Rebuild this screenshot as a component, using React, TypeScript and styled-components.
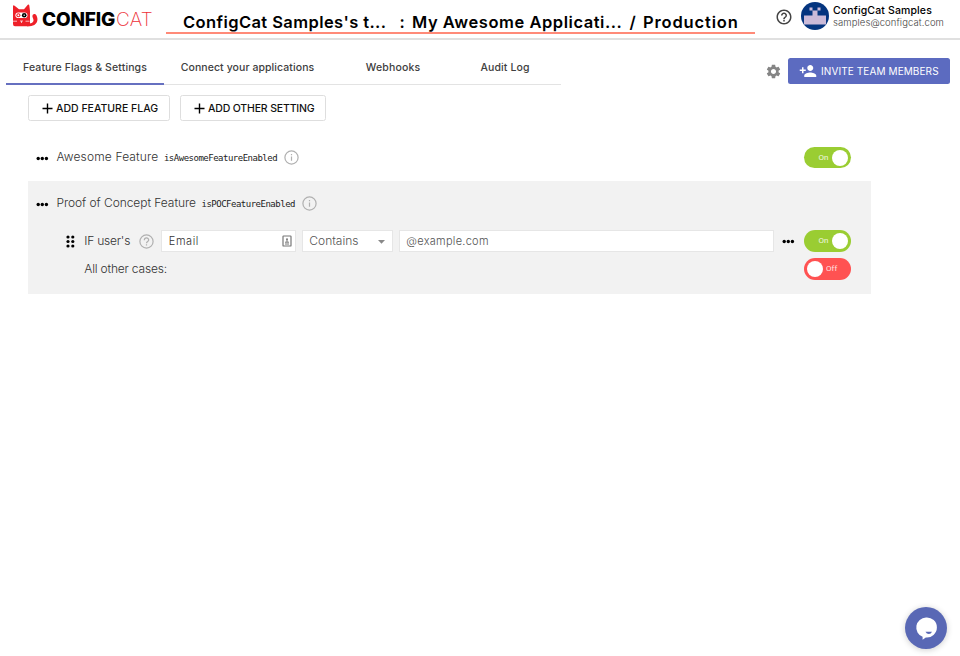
import React from 'react';
import styled, { createGlobalStyle } from 'styled-components';

const Global = createGlobalStyle`
  * { box-sizing: border-box; }
  body { margin: 0; background: #fff; color: #000; font-family: Inter, "Liberation Sans", sans-serif; }
`;

interface Spaced { $ls?: number }

const Page = styled.div`
  height: 656px;
  overflow: hidden;
`;

const Header = styled.header`
  display: flex;
  height: 40px;
  border-bottom: 2px solid #e0e0e0;
`;

const Logo = styled.div`
  display: flex;
  width: 154px;
  height: 38px;
  padding-left: 12px;
`;

const CatIcon = styled.svg`
  width: 26px;
  height: 26px;
  margin: 3px 4px 0 0;
  flex: none;
`;

const Brand = styled.span`
  font-size: 19px;
  line-height: 39px;
  font-weight: 800;
  letter-spacing: -0.2px;
`;

const BrandThin = styled.span`
  margin-left: 1px;
  color: #ed2f38;
  font-weight: 200;
  letter-spacing: 0.2px;
`;

const Breadcrumb = styled.div`
  display: flex;
  width: 589px;
  height: 34px;
  margin-left: 12px;
  padding: 10px 0 0 17px;
  border-bottom: 2px solid #ff8a78;
  white-space: nowrap;
`;

const Crumb = styled.span<{ $w: number } & Spaced>`
  width: ${p => p.$w}px;
  flex: none;
  font-size: 16.5px;
  line-height: 24px;
  font-weight: 600;
  letter-spacing: ${p => p.$ls ?? 0}px;
`;

const HelpIcon = styled.svg`
  width: 18px;
  height: 18px;
  margin: 8px 8.5px 0 19.5px;
  flex: none;
`;

const Avatar = styled.svg`
  width: 28px;
  height: 28px;
  margin: 2px 4px 0 0;
  flex: none;
`;

const Account = styled.div`
  display: flex;
  flex-direction: column;
  padding-top: 5px;
  white-space: nowrap;
`;

const AccountName = styled.span`
  font-size: 10.5px;
  line-height: 12px;
  font-weight: 500;
  letter-spacing: 0.14px;
`;

const AccountMail = styled.span`
  font-size: 9.5px;
  line-height: 12px;
  color: #444;
  font-weight: 300;
  letter-spacing: 0.09px;
`;

const NavRow = styled.div`
  display: flex;
  height: 45px;
  padding-left: 6px;
`;

const Tabs = styled.nav`
  display: flex;
  width: 555px;
  border-bottom: 1px solid #e3e3e3;
`;

const Tab = styled.a<{ $w: number; $active?: boolean } & Spaced>`
  width: ${p => p.$w}px;
  height: 45px;
  padding-top: 18px;
  border-bottom: ${p => (p.$active ? '2px solid #6670c0' : '0')};
  color: #404040;
  font-size: 10.5px;
  line-height: 20px;
  font-weight: 500;
  letter-spacing: ${p => p.$ls ?? 0}px;
  text-align: center;
  white-space: nowrap;
`;

const Gear = styled.svg`
  width: 17px;
  height: 17px;
  margin: 23px 6px 0 204px;
  flex: none;
`;

const InviteButton = styled.button`
  display: flex;
  align-items: center;
  width: 162px;
  height: 26px;
  margin-top: 18px;
  padding: 0 0 0 11px;
  border: 0;
  border-radius: 2.5px;
  background: #5c6bc0;
  color: #fff;
  font: 400 10px Inter, sans-serif;
  letter-spacing: 0.1px;
  white-space: nowrap;
`;

const InviteIcon = styled.svg`
  width: 18px;
  height: 18px;
  margin-right: 4px;
  flex: none;
`;

const Actions = styled.div`
  display: flex;
  gap: 10px;
  padding: 10px 0 0 28px;
`;

const ActionButton = styled.button<{ $w: number } & Spaced>`
  display: flex;
  align-items: center;
  width: ${p => p.$w}px;
  height: 26px;
  padding: 0 0 0 13px;
  border: 1px solid #dedede;
  border-radius: 2.5px;
  background: #fff;
  color: #111;
  font: 500 10.5px Inter, sans-serif;
  letter-spacing: ${p => p.$ls ?? 0}px;
  white-space: nowrap;
`;

const PlusIcon = styled.svg`
  width: 11px;
  height: 11px;
  margin-right: 3px;
  flex: none;
`;

const Setting = styled.section<{ $shaded?: boolean }>`
  width: 843px;
  margin-left: 28px;
  background: ${p => (p.$shaded ? '#f2f2f2' : 'transparent')};
`;

const List = styled.main`
  padding-top: 14px;
`;

const SettingRow = styled.div`
  display: flex;
  align-items: center;
  height: 46px;
  padding: 0 21px 1px 8px;
`;

const DotsIcon = styled.svg`
  width: 13px;
  height: 5px;
  margin-top: 1px;
  flex: none;
`;

const Name = styled.span<Spaced>`
  margin-left: 7.4px;
  color: #333;
  font-size: 12px;
  line-height: 18px;
  font-weight: 300;
  letter-spacing: ${p => p.$ls ?? 0}px;
  white-space: nowrap;
  padding-bottom: 1px;
`;

const Key = styled.code`
  margin-left: 5.6px;
  color: #222;
  font: 9px/12px "DejaVu Sans Mono", monospace;
  letter-spacing: -0.5px;
`;

const RoundIcon = styled.svg`
  width: 15px;
  height: 15px;
  margin-left: 7px;
  flex: none;
`;

const Spacer = styled.div`
  flex: 1;
`;

const Switch = styled.div<{ $on: boolean }>`
  display: flex;
  flex-direction: ${p => (p.$on ? 'row' : 'row-reverse')};
  align-items: center;
  justify-content: flex-end;
  gap: 3.5px;
  width: 46.5px;
  height: 21.5px;
  padding: 0 2.6px;
  margin-right: -0.5px;
  flex: none;
  border-radius: 11px;
  background: ${p => (p.$on ? '#9acd32' : '#ff5252')};
`;

const SwitchLabel = styled.span`
  color: #fff;
  opacity: 0.85;
  font: 8px/12px Roboto, sans-serif;
`;

const Knob = styled.span`
  width: 16px;
  height: 16px;
  border-radius: 50%;
  background: #fff;
`;

const Rule = styled.div`
  display: flex;
  align-items: center;
  height: 28px;
  padding: 0 21px 0 38px;
`;

const Rules = styled.div`
  padding: 0 0 10.5px;
`;

const DragIcon = styled.svg`
  width: 9px;
  height: 13px;
  flex: none;
`;

const RuleLabel = styled.span<{ $indent: number; $w: number } & Spaced>`
  width: ${p => p.$w}px;
  margin-left: ${p => p.$indent}px;
  padding-bottom: 1px;
  color: #333;
  font-size: 12px;
  line-height: 18px;
  font-weight: 300;
  letter-spacing: ${p => p.$ls ?? 0}px;
  white-space: nowrap;
`;

const Fields = styled.div`
  display: flex;
  gap: 5.5px;
  margin: 0 8px 0 7px;
`;

const Field = styled.div<{ $w: number; $size: number; $tone?: string } & Spaced>`
  display: flex;
  align-items: center;
  justify-content: space-between;
  width: ${p => p.$w}px;
  height: 22px;
  padding: 0 3px 1px 6.5px;
  flex: none;
  border: 1px solid #e6e6e6;
  background: #fff;
  color: ${p => p.$tone ?? '#555'};
  font-size: ${p => p.$size}px;
  font-weight: 300;
  letter-spacing: ${p => p.$ls ?? 0}px;
`;

const CardIcon = styled.svg`
  width: 10px;
  height: 12px;
`;

const Caret = styled.svg`
  width: 7px;
  height: 4px;
  margin: 2px 4px 0 0;
`;

const ChatButton = styled.button`
  position: fixed;
  left: 905px;
  top: 607px;
  width: 42px;
  height: 42px;
  padding: 0;
  border: 0;
  border-radius: 50%;
  background: #5968b5;
  box-shadow: 0 1px 6px rgba(0, 0, 0, 0.2);
`;

const ChatIcon = styled.svg`
  display: block;
  width: 42px;
  height: 42px;
`;

const Dots = () => (
  <DotsIcon viewBox="0 0 13 5">
    <circle cx="2.2" cy="2.5" r="1.7" /><circle cx="6.3" cy="2.5" r="1.7" /><circle cx="10.4" cy="2.5" r="1.7" />
  </DotsIcon>
);

const Info = () => (
  <RoundIcon viewBox="0 0 15 15" fill="none" stroke="#b0b0b0">
    <circle cx="7.5" cy="7.5" r="6.6" strokeWidth="1.2" />
    <path d="M7.5 6.6v4.2M7.5 4v1.2" strokeWidth="1.2" />
  </RoundIcon>
);

const Plus = () => (
  <PlusIcon viewBox="0 0 11 11"><path d="M5.5 .5v10M.5 5.5h10" stroke="#000" strokeWidth="1.4" /></PlusIcon>
);

const Toggle = ({ on }: { on: boolean }) => (
  <Switch $on={on}>
    <SwitchLabel>{on ? 'On' : 'Off'}</SwitchLabel>
    <Knob />
  </Switch>
);

export default function App() {
  return (
    <Page>
      <Global />
      <Header>
        <Logo>
          <CatIcon viewBox="0 0 26 26">
            <path d="M1 3.2Q1.2 1.6 2.6 2.8L7 6.2h5L15.8 1.8Q17 .8 17.3 2.6L18 8V21.5Q18 23.2 16.2 23.2H3Q1 23.2 1 21z" fill="#ee2029" />
            <path d="M15 20.6c7 .6 7.2-3.1 5.8-5.9-1.6-3.2 2.3-5.3 3.9-1.8 2.3 5.1-.6 10.9-8.2 10.3H15z" fill="#ee2029" />
            <rect x="3.4" y="9.5" width="12" height="5.6" rx="2.8" fill="#fff" />
            <circle cx="6.4" cy="12.3" r="2" fill="#ee2029" /><circle cx="6.4" cy="12.3" r="1" fill="#fff" />
            <circle cx="12.2" cy="12.3" r="2.3" /><circle cx="12.2" cy="12.3" r=".7" fill="#fff" />
            <path d="M1 18.2h4M13.5 18.2h4M8 18h3M9.5 18v2" stroke="#fff" strokeWidth=".7" />
          </CatIcon>
          <Brand>CONFIG<BrandThin>CAT</BrandThin></Brand>
        </Logo>
        <Breadcrumb>
          <Crumb $w={216.5} $ls={0.41}>ConfigCat Samples's t...</Crumb>
          <Crumb $w={12.5}>:</Crumb>
          <Crumb $w={217.5} $ls={0.55}>My Awesome Applicati...</Crumb>
          <Crumb $w={13.5}>/</Crumb>
          <Crumb $w={95} $ls={0.85}>Production</Crumb>
        </Breadcrumb>
        <HelpIcon viewBox="0 0 24 24" fill="#444">
          <path d="M11 18h2v-2h-2v2zm1-16C6.48 2 2 6.48 2 12s4.48 10 10 10 10-4.48 10-10S17.52 2 12 2zm0 18c-4.41 0-8-3.59-8-8s3.59-8 8-8 8 3.59 8 8-3.59 8-8 8zm0-14c-2.21 0-4 1.79-4 4h2c0-1.1.9-2 2-2s2 .9 2 2c0 2-3 1.75-3 5h2c0-2.25 3-2.5 3-5 0-2.21-1.79-4-4-4z" />
        </HelpIcon>
        <Avatar viewBox="0 0 28 28">
          <circle cx="14" cy="14" r="14" fill="#05357f" />
          <path d="M8.5 5.5h3v3h-3zM16.5 5.5h3v3h-3zM11.5 8.5h5v5h8.5v9H3v-9h8.5z" fill="#cbbad8" />
        </Avatar>
        <Account>
          <AccountName>ConfigCat Samples</AccountName>
          <AccountMail>samples@configcat.com</AccountMail>
        </Account>
      </Header>
      <NavRow>
        <Tabs>
          <Tab $w={158} $ls={0.12} $active>Feature Flags &amp; Settings</Tab>
          <Tab $w={167} $ls={0.08}>Connect your applications</Tab>
          <Tab $w={124} $ls={0.16}>Webhooks</Tab>
          <Tab $w={100} $ls={0.11}>Audit Log</Tab>
        </Tabs>
        <Gear viewBox="0 0 24 24" fill="#858585">
          <path d="M19.14 12.94c.04-.3.06-.61.06-.94 0-.32-.02-.64-.07-.94l2.03-1.58c.18-.14.23-.41.12-.61l-1.92-3.32c-.12-.22-.37-.29-.59-.22l-2.39.96c-.5-.38-1.03-.7-1.62-.94l-.36-2.54c-.04-.24-.24-.41-.48-.41h-3.84c-.24 0-.43.17-.47.41l-.36 2.54c-.59.24-1.13.57-1.62.94l-2.39-.96c-.22-.08-.47 0-.59.22L2.74 8.87c-.12.21-.08.47.12.61l2.03 1.58c-.05.3-.09.63-.09.94s.02.64.07.94l-2.03 1.58c-.18.14-.23.41-.12.61l1.92 3.32c.12.22.37.29.59.22l2.39-.96c.5.38 1.03.7 1.62.94l.36 2.54c.05.24.24.41.48.41h3.84c.24 0 .44-.17.47-.41l.36-2.54c.59-.24 1.13-.56 1.62-.94l2.39.96c.22.08.47 0 .59-.22l1.92-3.32c.12-.22.07-.47-.12-.61l-2.01-1.58zM12 15.6c-1.98 0-3.6-1.62-3.6-3.6s1.62-3.6 3.6-3.6 3.6 1.62 3.6 3.6-1.62 3.6-3.6 3.6z" />
        </Gear>
        <InviteButton>
          <InviteIcon viewBox="0 0 24 24" fill="#fff">
            <path d="M15 12c2.21 0 4-1.79 4-4s-1.79-4-4-4-4 1.79-4 4 1.79 4 4 4zm-9-2V7H4v3H1v2h3v3h2v-3h3v-2H6zm9 4c-2.67 0-8 1.34-8 4v2h16v-2c0-2.66-5.33-4-8-4z" />
          </InviteIcon>
          INVITE TEAM MEMBERS
        </InviteButton>
      </NavRow>
      <Actions>
        <ActionButton $w={142}><Plus />ADD FEATURE FLAG</ActionButton>
        <ActionButton $w={146} $ls={-0.16}><Plus />ADD OTHER SETTING</ActionButton>
      </Actions>
      <List>
        <Setting>
          <SettingRow>
            <Dots /><Name $ls={0.14}>Awesome Feature</Name><Key>isAwesomeFeatureEnabled</Key><Info />
            <Spacer /><Toggle on />
          </SettingRow>
        </Setting>
        <Setting $shaded>
          <SettingRow>
            <Dots /><Name $ls={-0.05}>Proof of Concept Feature</Name><Key>isPOCFeatureEnabled</Key><Info />
          </SettingRow>
          <Rules>
            <Rule>
              <DragIcon viewBox="0 0 9 13">
                <circle cx="2" cy="2" r="1.6" /><circle cx="6.8" cy="2" r="1.6" />
                <circle cx="2" cy="6.5" r="1.6" /><circle cx="6.8" cy="6.5" r="1.6" />
                <circle cx="2" cy="11" r="1.6" /><circle cx="6.8" cy="11" r="1.6" />
              </DragIcon>
              <RuleLabel $indent={9.3} $w={48} $ls={-0.22}>IF user's</RuleLabel>
              <RoundIcon viewBox="0 0 15 15" fill="none" stroke="#b0b0b0">
                <circle cx="7.5" cy="7.5" r="6.6" strokeWidth="1.2" />
                <path d="M5.3 6.2c0-3 4.4-3 4.4-.2 0 1.6-2.2 1.6-2.2 3.3M7.5 10.3v1.2" strokeWidth="1.2" />
              </RoundIcon>
              <Fields>
                <Field $w={135} $size={11} $ls={0.55} $tone="#333">
                  Email
                  <CardIcon viewBox="0 0 10 12" fill="none" stroke="#777">
                    <rect x="1" y="1" width="8" height="10" rx=".6" strokeWidth="1.2" />
                    <circle cx="5" cy="4.2" r="1" fill="#777" stroke="none" />
                    <path d="M5 5v2M3 7.2h4M3 9h4" />
                  </CardIcon>
                </Field>
                <Field $w={91.5} $size={12}>
                  Contains
                  <Caret viewBox="0 0 7 4"><path d="M0 0h7L3.5 3.8z" fill="#888" /></Caret>
                </Field>
                <Field $w={375} $size={11} $ls={0.27}>@example.com</Field>
              </Fields>
              <Dots />
              <Spacer />
              <Toggle on />
            </Rule>
            <Rule>
              <RuleLabel $indent={18.3} $w={90} $ls={-0.19}>All other cases:</RuleLabel>
              <Spacer />
              <Toggle on={false} />
            </Rule>
          </Rules>
        </Setting>
      </List>
      <ChatButton>
        <ChatIcon viewBox="0 0 42 42">
          <path d="M21 10.5a10 10 0 1 1-.2 19.9L17.6 32.8V29.8A10 10 0 0 1 21 10.5z" fill="#fff" />
          <path d="M20.5 24.7h6.5q-1 2.3-3.2 2.3t-3.3-2.3z" fill="#5968b5" />
        </ChatIcon>
      </ChatButton>
    </Page>
  );
}
